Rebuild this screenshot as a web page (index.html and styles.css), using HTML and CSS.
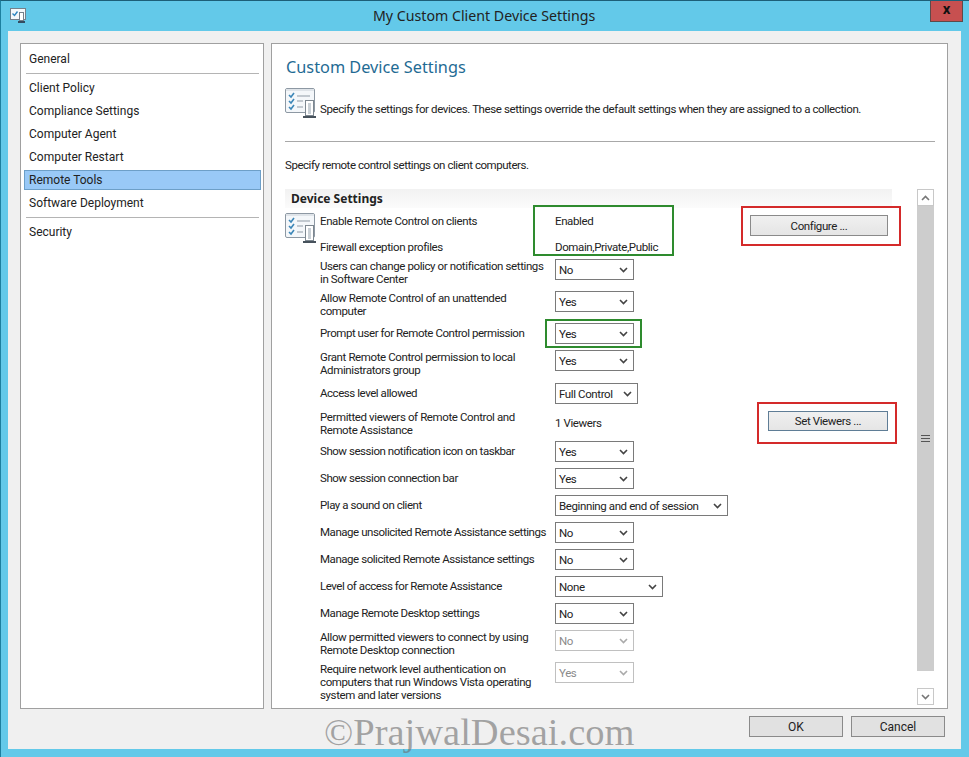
FILE: index.html
```html
<!DOCTYPE html>
<html lang="en">
<head>
    <meta charset="UTF-8">
    <meta name="viewport" content="width=device-width, initial-scale=1.0">
    <title>My Custom Client Device Settings</title>
    <link rel="stylesheet" href="styles.css">
</head>
<body>
    <svg class="sprites" width="0" height="0">
        <symbol id="checklist" viewBox="0 0 32 32">
            <rect x="0.5" y="1.5" width="29" height="24" rx="1.5" fill="#f4f7fa" stroke="#8d98a3"/>
            <path d="M1 2h28v2H1z" fill="#dfe4e9"/>
            <path d="M12 9h13M12 14h6M12 20h6" stroke="#8f9aa5" fill="none"/>
            <path d="M4 8l2 2 3-4M4 14l2 2 3-4M4 20l2 2 3-4" stroke="#3d87b8" stroke-width="1.6" fill="none"/>
            <rect x="20.5" y="13.5" width="8" height="15" fill="#fff" stroke="#7d8790"/>
            <rect x="23" y="16" width="3" height="11" fill="#c9d0d6"/>
            <path d="M18 30h13" stroke="#47525c" stroke-width="2"/>
        </symbol>
        <symbol id="chevron" viewBox="0 0 9 6">
            <path d="M1 1l3.5 3.5L8 1" fill="none" stroke="currentColor" stroke-width="1.6"/>
        </symbol>
    </svg>

    <div class="window">
        <div class="titlebar">
            <svg class="title-icon" viewBox="0 0 16 16">
                <rect x="0.5" y="1.5" width="15" height="11" fill="#f5f8fb" stroke="#75808a"/>
                <path d="M2.5 6.5l2 2 3-4" fill="none" stroke="#2f86c0" stroke-width="1.4"/>
                <rect x="9.5" y="5.5" width="4" height="8" fill="#fff" stroke="#75808a"/>
                <path d="M8 15h7" stroke="#223" stroke-width="1.5"/>
            </svg>
            <span class="title-text">My Custom Client Device Settings</span>
            <div class="close-btn">x</div>
        </div>

        <div class="client">
            <div class="panels">
                <div class="nav">
                    <div class="nav-item">General</div>
                    <div class="nav-sep"></div>
                    <div class="nav-item">Client Policy</div>
                    <div class="nav-item">Compliance Settings</div>
                    <div class="nav-item">Computer Agent</div>
                    <div class="nav-item">Computer Restart</div>
                    <div class="nav-item selected">Remote Tools</div>
                    <div class="nav-item">Software Deployment</div>
                    <div class="nav-sep"></div>
                    <div class="nav-item">Security</div>
                </div>

                <div class="content">
                    <h1 class="page-title">Custom Device Settings</h1>
                    <div class="intro">
                        <svg class="list-icon"><use href="#checklist"/></svg>
                        <span>Specify the settings for devices. These settings override the default settings when they are assigned to a collection.</span>
                    </div>
                    <div class="divider"></div>
                    <p class="lead">Specify remote control settings on client computers.</p>

                    <div class="settings-area">
                        <div class="settings">
                            <div class="section-head">Device Settings</div>
                            <div class="settings-body">
                                <svg class="list-icon"><use href="#checklist"/></svg>
                                <div class="grid">
                                    <div class="label tall">Enable Remote Control on clients</div>
                                    <div class="value tall">Enabled</div>
                                    <button class="btn wide">Configure ...</button>

                                    <div class="label tall">Firewall exception profiles</div>
                                    <div class="value tall">Domain,Private,Public</div>

                                    <div class="label two">Users can change policy or notification settings in Software Center</div>
                                    <div class="combo"><span>No</span><svg class="chev"><use href="#chevron"/></svg></div>
                                    <div></div>

                                    <div class="label two narrow-label">Allow Remote Control of an unattended computer</div>
                                    <div class="combo"><span>Yes</span><svg class="chev"><use href="#chevron"/></svg></div>
                                    <div></div>

                                    <div class="label one">Prompt user for Remote Control permission</div>
                                    <div class="combo"><span>Yes</span><svg class="chev"><use href="#chevron"/></svg></div>
                                    <div></div>

                                    <div class="label two narrow-label">Grant Remote Control permission to local Administrators group</div>
                                    <div class="combo"><span>Yes</span><svg class="chev"><use href="#chevron"/></svg></div>
                                    <div></div>

                                    <div class="label one">Access level allowed</div>
                                    <div class="combo w-full"><span>Full Control</span><svg class="chev"><use href="#chevron"/></svg></div>
                                    <div></div>

                                    <div class="label two narrow-label">Permitted viewers of Remote Control and Remote Assistance</div>
                                    <div class="value viewers">1 Viewers</div>
                                    <button class="btn narrow">Set Viewers ...</button>

                                    <div class="label one">Show session notification icon on taskbar</div>
                                    <div class="combo"><span>Yes</span><svg class="chev"><use href="#chevron"/></svg></div>
                                    <div></div>

                                    <div class="label one">Show session connection bar</div>
                                    <div class="combo"><span>Yes</span><svg class="chev"><use href="#chevron"/></svg></div>
                                    <div></div>

                                    <div class="label one">Play a sound on client</div>
                                    <div class="combo w-sound"><span>Beginning and end of session</span><svg class="chev"><use href="#chevron"/></svg></div>
                                    <div></div>

                                    <div class="label one">Manage unsolicited Remote Assistance settings</div>
                                    <div class="combo"><span>No</span><svg class="chev"><use href="#chevron"/></svg></div>
                                    <div></div>

                                    <div class="label one">Manage solicited Remote Assistance settings</div>
                                    <div class="combo"><span>No</span><svg class="chev"><use href="#chevron"/></svg></div>
                                    <div></div>

                                    <div class="label one">Level of access for Remote Assistance</div>
                                    <div class="combo w-none"><span>None</span><svg class="chev"><use href="#chevron"/></svg></div>
                                    <div></div>

                                    <div class="label one">Manage Remote Desktop settings</div>
                                    <div class="combo"><span>No</span><svg class="chev"><use href="#chevron"/></svg></div>
                                    <div></div>

                                    <div class="label two narrow-label">Allow permitted viewers to connect by using Remote Desktop connection</div>
                                    <div class="combo disabled"><span>No</span><svg class="chev"><use href="#chevron"/></svg></div>
                                    <div></div>

                                    <div class="label two narrow-label">Require network level authentication on computers that run Windows Vista operating system and later versions</div>
                                    <div class="combo disabled"><span>Yes</span><svg class="chev"><use href="#chevron"/></svg></div>
                                    <div></div>
                                </div>
                            </div>
                        </div>

                        <div class="scrollbar">
                            <div class="scroll-btn"><svg class="chev up"><use href="#chevron"/></svg></div>
                            <div class="thumb"><div class="grip"></div></div>
                            <div class="track"></div>
                            <div class="scroll-btn"><svg class="chev"><use href="#chevron"/></svg></div>
                        </div>
                    </div>
                </div>
            </div>

            <div class="footer">
                <button class="btn dialog">OK</button>
                <button class="btn dialog">Cancel</button>
            </div>
        </div>
    </div>

    <!-- annotations drawn over the screenshot -->
    <div class="mark green mark-values"></div>
    <div class="mark green mark-prompt"></div>
    <div class="mark red mark-configure"></div>
    <div class="mark red mark-viewers"></div>
    <div class="watermark">©PrajwalDesai.com</div>
</body>
</html>
```

FILE: styles.css
```css
* {
    box-sizing: border-box;
}

body {
    margin: 0;
    width: 969px;
    height: 757px;
    overflow: hidden;
    position: relative;
    font-family: Roboto, sans-serif;
    font-size: 12px;
    color: #222;
    background-color: #63c9e9;
}

.sprites {
    position: absolute;
}

.window {
    height: 757px;
    display: flex;
    flex-direction: column;
    border-top: 1px solid #1d5f78;
    border-left: 1px solid #1d7f9f;
}

.titlebar {
    height: 30px;
    flex: none;
    display: flex;
    justify-content: space-between;
    padding-left: 9px;
    position: relative;
}

.title-icon {
    width: 16px;
    height: 16px;
    margin-top: 6px;
}

.title-text {
    font-family: "Noto Sans", sans-serif;
    font-size: 14.2px;
    line-height: 30px;
    color: #222;
    margin-left: 347px;
    flex: 1;
}

.close-btn {
    width: 33px;
    height: 21px;
    margin-right: 6px;
    background-color: #c75050;
    border: 1px solid #5d4a4a;
    border-top: none;
    color: #111;
    font-weight: bold;
    font-size: 15px;
    line-height: 17px;
    text-align: center;
}

.client {
    flex: 1;
    margin: 0 8px 8px 7px;
    padding: 12px 13px 0 12px;
    background-color: #f0f0f0;
}

.panels {
    display: flex;
    gap: 7px;
    height: 666px;
}

.nav {
    width: 244px;
    flex: none;
    background-color: #fff;
    border: 1px solid #a0a0a0;
    padding: 4px 2px 3px 3px;
}

.nav-item {
    height: 23px;
    line-height: 21px;
    padding-left: 4px;
    border: 1px solid transparent;
}

.nav-item.selected {
    background-color: #99c9f7;
    border-color: #6d9fc8;
    height: 20px;
    line-height: 18px;
    margin: 1px 0 2px;
}

.nav-sep {
    height: 1px;
    margin: 2px 2px 3px;
    background-color: #b4b4b4;
}

.content {
    flex: 1;
    background-color: #fff;
    border: 1px solid #a0a0a0;
    padding: 13px 12px 0 13px;
}

.page-title {
    margin: 0 0 0 1px;
    font-family: "Noto Sans", sans-serif;
    font-size: 16.3px;
    font-weight: normal;
    line-height: 20px;
    color: #1f6b94;
}

.intro {
    display: flex;
    align-items: flex-end;
    gap: 3px;
    margin-top: 10px;
    height: 32px;
    font-size: 11.5px;
    letter-spacing: -0.39px;
}

.intro span {
    line-height: 18px;
    margin-bottom: 1px;
}

.list-icon {
    width: 32px;
    height: 32px;
    flex: none;
}

.divider {
    height: 1px;
    margin-top: 22px;
    background-color: #a8a8a8;
}

.lead {
    margin: 15px 0 0;
    font-size: 11.5px;
    letter-spacing: -0.45px;
    line-height: 16px;
}

.settings-area {
    display: flex;
    justify-content: space-between;
    margin-top: 16px;
}

.settings {
    width: 607px;
}

.section-head {
    height: 19px;
    line-height: 19px;
    padding-left: 6px;
    font-family: "Noto Sans", sans-serif;
    font-weight: bold;
    background: linear-gradient(#f2f2f2, #fbfbfb);
}

.settings-body {
    display: flex;
    align-items: flex-start;
}

.settings-body .list-icon {
    width: 35px;
    height: 32px;
    margin-top: 4px;
    padding-right: 3px;
}

.grid {
    display: grid;
    grid-template-columns: 235px 195px 138px;
    grid-template-rows: 26px 25px 32px 32px 27px 33px 27px 31px 27px 27px 27px 27px 27px 27px 27px 32px 43px;
    font-size: 11.5px;
    letter-spacing: -0.39px;
}

.label {
    line-height: 13px;
}

.label.two {
    padding-top: 1px;
    padding-right: 10px;
}

.label.narrow-label {
    padding-right: 20px;
}

.label.one {
    line-height: 21px;
    white-space: nowrap;
    letter-spacing: -0.45px;
}

.tall {
    line-height: 26px;
}

.value.viewers {
    line-height: 26px;
}

.combo {
    width: 79px;
    height: 21px;
    padding: 0 5px 0 3px;
    display: flex;
    align-items: center;
    justify-content: space-between;
    background-color: #fff;
    border: 1px solid #7a7a7a;
}

.combo.w-full {
    width: 83px;
}

.combo.w-sound {
    width: 173px;
}

.combo.w-none {
    width: 108px;
}

.combo.disabled {
    color: #8a8a8a;
    border-color: #c0c0c0;
}

.chev {
    width: 9px;
    height: 6px;
    color: #444;
    flex: none;
}

.chev.up {
    transform: rotate(180deg);
}

.disabled .chev {
    color: #aaa;
}

.scroll-btn .chev {
    color: #777;
}

.btn {
    font: inherit;
    letter-spacing: inherit;
    color: #222;
    background: linear-gradient(#f0f0f0, #e5e5e5);
    border: 1px solid #8a8a8a;
    padding: 0;
}

.btn.wide {
    grid-row: span 2;
    height: 21px;
    margin-top: 7px;
}

.btn.narrow {
    width: 120px;
    height: 20px;
    justify-self: end;
    margin-top: 1px;
    border-color: #5f7d96;
}

.scrollbar {
    width: 17px;
    height: 516px;
    display: flex;
    flex-direction: column;
    margin-right: 1px;
    background-color: #fff;
}

.scroll-btn {
    height: 17px;
    flex: none;
    display: flex;
    align-items: center;
    justify-content: center;
    background-color: #fff;
    border: 1px solid #c8c8c8;
}

.thumb {
    flex: 1;
    display: flex;
    align-items: center;
    justify-content: center;
    background-color: #cdcdcd;
}

.grip {
    width: 9px;
    height: 7px;
    border-top: 1px solid #555;
    border-bottom: 1px solid #555;
}

.grip::after {
    content: "";
    display: block;
    height: 1px;
    margin-top: 2px;
    background-color: #555;
}

.track {
    height: 17px;
    flex: none;
}

.footer {
    display: flex;
    justify-content: flex-end;
    gap: 8px;
    margin-top: 7px;
    padding-right: 3px;
}

.btn.dialog {
    width: 94px;
    height: 21px;
    background: #e1e1e1;
    font-size: 12px;
}

.mark {
    position: absolute;
    border: 2px solid;
}

.mark.green {
    border-color: #2e8b2e;
}

.mark.red {
    border-color: #d42a2a;
}

.mark-values {
    left: 533px;
    top: 205px;
    width: 141px;
    height: 51px;
}

.mark-prompt {
    left: 545px;
    top: 319px;
    width: 97px;
    height: 29px;
}

.mark-configure {
    left: 741px;
    top: 206px;
    width: 160px;
    height: 40px;
}

.mark-viewers {
    left: 757px;
    top: 402px;
    width: 140px;
    height: 42px;
}

.watermark {
    position: absolute;
    left: 324px;
    top: 708px;
    font-family: "Liberation Serif", serif;
    font-size: 38.5px;
    line-height: 48px;
    color: rgba(110, 110, 110, 0.6);
    white-space: nowrap;
}
```
